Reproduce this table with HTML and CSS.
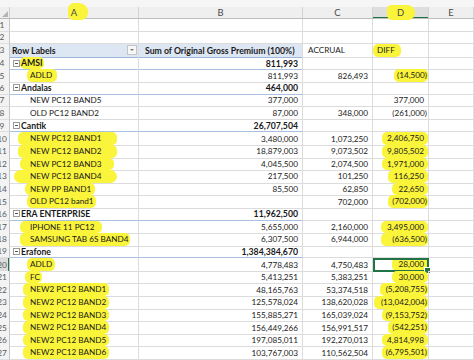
FILE: index.html
```html
<!DOCTYPE html>
<html>
<head>
<meta charset="utf-8">
<link rel="stylesheet" href="styles.css">
</head>
<body>
<div class="sheet">
  <div class="topbar"></div>
  <div class="hdr">
    <div class="corner"><span class="tri"></span></div>
    <div class="ch"><span class="mark mark-a"></span><span class="lt">A</span></div>
    <div class="ch">B</div>
    <div class="ch">C</div>
    <div class="ch sel"><span class="mark mark-d"></span><span class="lt">D</span></div>
    <div class="ch">E</div>
  </div>

  <div class="r"><div class="rh"><span>1</span></div><div class="c"></div><div class="c"></div><div class="c"></div><div class="c"></div><div class="c"></div></div>
  <div class="r"><div class="rh"><span>2</span></div><div class="c"></div><div class="c"></div><div class="c"></div><div class="c"></div><div class="c"></div></div>
  <div class="r"><div class="rh"><span>3</span></div>
    <div class="c b ph rl">Row Labels<span class="dd"></span></div>
    <div class="c b ph sum">Sum of Original Gross Premium (100%)</div>
    <div class="c acc">ACCRUAL</div>
    <div class="c"><span class="hl h-diff">DIFF</span></div>
    <div class="c"></div></div>
  <div class="r"><div class="rh"><span>4</span></div>
    <div class="c b gb"><span class="tog"></span><span class="hl h-amsi">AMSI</span></div>
    <div class="c n p b gb">811,993</div><div class="c"></div><div class="c"></div><div class="c"></div></div>
  <div class="r"><div class="rh"><span>5</span></div>
    <div class="c"><span class="hl h-adld">ADLD</span></div>
    <div class="c n p">811,993</div><div class="c n p">826,493</div>
    <div class="c n dh"><span class="hl dn w34">(14,500)</span></div><div class="c"></div></div>
  <div class="r"><div class="rh"><span>6</span></div>
    <div class="c b gb"><span class="tog"></span>Andalas</div>
    <div class="c n p b gb">464,000</div><div class="c"></div><div class="c"></div><div class="c"></div></div>
  <div class="r"><div class="rh"><span>7</span></div>
    <div class="c"><span class="lb">NEW PC12 BAND5</span></div>
    <div class="c n p">377,000</div><div class="c"></div><div class="c n p">377,000</div><div class="c"></div></div>
  <div class="r"><div class="rh"><span>8</span></div>
    <div class="c"><span class="lb">OLD PC12 BAND2</span></div>
    <div class="c n p">87,000</div><div class="c n p">348,000</div><div class="c n">(261,000)</div><div class="c"></div></div>
  <div class="r"><div class="rh"><span>9</span></div>
    <div class="c b gb"><span class="tog"></span>Cantik</div>
    <div class="c n p b gb">26,707,504</div><div class="c"></div><div class="c"></div><div class="c"></div></div>
  <div class="r"><div class="rh"><span>10</span></div>
    <div class="c"><span class="hl h-cantik">NEW PC12 BAND1</span></div>
    <div class="c n p">3,480,000</div><div class="c n p">1,073,250</div>
    <div class="c n dh"><span class="hl dp w46">2,406,750</span></div><div class="c"></div></div>
  <div class="r"><div class="rh"><span>11</span></div>
    <div class="c"><span class="hl h-cantik">NEW PC12 BAND2</span></div>
    <div class="c n p">18,879,003</div><div class="c n p">9,073,502</div>
    <div class="c n dh"><span class="hl dp w46">9,805,502</span></div><div class="c"></div></div>
  <div class="r"><div class="rh"><span>12</span></div>
    <div class="c"><span class="hl h-cantik3">NEW PC12 BAND3</span></div>
    <div class="c n p">4,045,500</div><div class="c n p">2,074,500</div>
    <div class="c n dh"><span class="hl dp w46">1,971,000</span></div><div class="c"></div></div>
  <div class="r"><div class="rh"><span>13</span></div>
    <div class="c"><span class="hl h-cantik4">NEW PC12 BAND4</span></div>
    <div class="c n p">217,500</div><div class="c n p">101,250</div>
    <div class="c n dh"><span class="hl dp w40">116,250</span></div><div class="c"></div></div>
  <div class="r"><div class="rh"><span>14</span></div>
    <div class="c"><span class="hl h-pp">NEW PP BAND1</span></div>
    <div class="c n p">85,500</div><div class="c n p">62,850</div>
    <div class="c n dh"><span class="hl dp w36">22,650</span></div><div class="c"></div></div>
  <div class="r"><div class="rh"><span>15</span></div>
    <div class="c"><span class="hl h-old">OLD PC12 band1</span></div>
    <div class="c"></div><div class="c n p">702,000</div>
    <div class="c n dh"><span class="hl dn w40">(702,000)</span></div><div class="c"></div></div>
  <div class="r"><div class="rh"><span>16</span></div>
    <div class="c b gb"><span class="tog"></span>ERA ENTERPRISE</div>
    <div class="c n p b gb">11,962,500</div><div class="c"></div><div class="c"></div><div class="c"></div></div>
  <div class="r"><div class="rh"><span>17</span></div>
    <div class="c"><span class="hl h-era">IPHONE 11 PC12</span></div>
    <div class="c n p">5,655,000</div><div class="c n p">2,160,000</div>
    <div class="c n dh"><span class="hl dp w47">3,495,000</span></div><div class="c"></div></div>
  <div class="r"><div class="rh"><span>18</span></div>
    <div class="c"><span class="hl h-era2">SAMSUNG TAB 6S BAND4</span></div>
    <div class="c n p">6,307,500</div><div class="c n p">6,944,000</div>
    <div class="c n dh"><span class="hl dn w47">(636,500)</span></div><div class="c"></div></div>
  <div class="r"><div class="rh"><span>19</span></div>
    <div class="c b gb"><span class="tog"></span>Erafone</div>
    <div class="c n p b gb">1,384,384,670</div><div class="c"></div><div class="c"></div><div class="c"></div></div>
  <div class="r"><div class="rh rsel"><span>20</span></div>
    <div class="c"><span class="hl h-adld2">ADLD</span></div>
    <div class="c n p">4,778,483</div><div class="c n p">4,750,483</div>
    <div class="c n dh selc"><span class="hl dp w36">28,000</span></div><div class="c"></div></div>
  <div class="r"><div class="rh"><span>21</span></div>
    <div class="c"><span class="hl h-fc">FC</span></div>
    <div class="c n p">5,413,251</div><div class="c n p">5,383,251</div>
    <div class="c n dh"><span class="hl dp w36">30,000</span></div><div class="c"></div></div>
  <div class="r"><div class="rh"><span>22</span></div>
    <div class="c"><span class="hl h-new2">NEW2 PC12 BAND1</span></div>
    <div class="c n p">48,165,763</div><div class="c n p">53,374,518</div>
    <div class="c n dh"><span class="hl dn w48">(5,208,755)</span></div><div class="c"></div></div>
  <div class="r"><div class="rh"><span>23</span></div>
    <div class="c"><span class="hl h-new2">NEW2 PC12 BAND2</span></div>
    <div class="c n p">125,578,024</div><div class="c n p">138,620,028</div>
    <div class="c n dh"><span class="hl dn w54">(13,042,004)</span></div><div class="c"></div></div>
  <div class="r"><div class="rh"><span>24</span></div>
    <div class="c"><span class="hl h-new2">NEW2 PC12 BAND3</span></div>
    <div class="c n p">155,885,271</div><div class="c n p">165,039,024</div>
    <div class="c n dh"><span class="hl dn w46">(9,153,752)</span></div><div class="c"></div></div>
  <div class="r"><div class="rh"><span>25</span></div>
    <div class="c"><span class="hl h-new2">NEW2 PC12 BAND4</span></div>
    <div class="c n p">156,449,266</div><div class="c n p">156,991,517</div>
    <div class="c n dh"><span class="hl dn w40">(542,251)</span></div><div class="c"></div></div>
  <div class="r"><div class="rh"><span>26</span></div>
    <div class="c"><span class="hl h-new2">NEW2 PC12 BAND5</span></div>
    <div class="c n p">197,085,011</div><div class="c n p">192,270,013</div>
    <div class="c n dh"><span class="hl dp w46">4,814,998</span></div><div class="c"></div></div>
  <div class="r"><div class="rh"><span>27</span></div>
    <div class="c"><span class="hl h-new2">NEW2 PC12 BAND6</span></div>
    <div class="c n p">103,767,003</div><div class="c n p">110,562,504</div>
    <div class="c n dh"><span class="hl dn w46">(6,795,501)</span></div><div class="c"></div></div>
</div>
</body>
</html>
```

FILE: styles.css
```css
* { box-sizing: border-box; }
html, body { margin: 0; padding: 0; }
body {
  width: 474px;
  height: 360px;
  overflow: hidden;
  background: #fff;
  font-family: Lato, "Liberation Sans", sans-serif;
  font-size: 8.2px;
  color: #1a1a1a;
}
.topbar { height: 7px; background: #f6f6f6; }

.hdr {
  display: grid;
  grid-template-columns: 10px 129px 164px 70px 56px 45px;
  height: 12px;
  background: #efefef;
  border-bottom: 1px solid #bdbdbd;
}
.corner { position: relative; border-right: 1px solid #d0d0d0; }
.tri {
  position: absolute; right: 1px; bottom: 1px;
  width: 0; height: 0;
  border-left: 6px solid transparent;
  border-bottom: 6px solid #b5b5b5;
}
.ch {
  position: relative;
  display: flex; align-items: center; justify-content: center;
  border-right: 1px solid #d3d3d3;
  color: #4a4a4a;
  font-size: 9.4px;
}
.ch.sel { background: #dedede; box-shadow: inset 0 -1px 0 #217346; }
.lt { position: relative; }
.mark { position: absolute; background: #faf43a; }
.mark-a { left: 58px; top: -4px; width: 20px; height: 17px; border-radius: 6px 9px 7px 5px; }
.mark-d { left: 14px; top: -2px; width: 28px; height: 15px; border-radius: 5px 9px 8px 6px; }

.r {
  display: grid;
  grid-template-columns: 10px 129px 164px 70px 56px 45px;
  height: 12.6px;
}
.rh {
  display: flex; align-items: center;
  overflow: hidden;
  background: #f3f3f3;
  border-right: 1px solid #c6c6c6;
  border-bottom: 1px solid #dedede;
  color: #5a5a5a;
  font-size: 8.4px;
}
.rh span { flex: none; width: 14px; margin-left: -5px; text-align: center; }
.rh.rsel { background: #dcdcdc; box-shadow: inset -1px 0 0 #217346; }

.c {
  position: relative;
  display: flex; align-items: center;
  white-space: nowrap;
  min-width: 0;
  border-right: 1px solid #dcdcdc;
  border-bottom: 1px solid #dcdcdc;
  padding: 0 1px 0 2px;
}
.n { justify-content: flex-end; }
.p { padding-right: 4px; }
.b { font-weight: 700; font-size: 8.7px; }
.ph { background: #dde7f4; border-bottom-color: #9bb8db; }
.gb { border-bottom-color: #a9c1e0; }
.sum { padding-left: 6px; }
.acc { padding-left: 5px; }
.rl { justify-content: space-between; padding-right: 1px; }
.dd {
  position: relative;
  width: 10px; height: 10px;
  background: #f7f7f7;
  border: 1px solid #c4c4c4;
}
.dd::after {
  content: "";
  position: absolute; left: 2px; top: 3px;
  border-left: 2px solid transparent;
  border-right: 2px solid transparent;
  border-top: 2px solid #777;
}

.tog {
  position: relative;
  flex: none;
  width: 7px; height: 7px;
  margin: 0 1px 0 1px;
  border: 1px solid #9a9a9a;
  background: #fff;
}
.tog::after {
  content: "";
  position: absolute; left: 1px; right: 1px; top: 2px;
  height: 1px; background: #555;
}
.lb { margin-left: 18px; }

.hl {
  display: inline-block;
  background: #faf43a;
  line-height: 12.6px;
  border-radius: 5px;
}
.h-diff { margin-left: -2px; padding: 0 6px 0 4px; }
.h-amsi { margin-left: -1px; padding: 0 1px; }
.h-adld { margin-left: 15px; padding: 0 5px 0 3px; }
.h-cantik { margin-left: 6px; padding: 0 16px 0 12px; }
.h-cantik3 { margin-left: 8px; padding: 0 13px 0 10px; }
.h-cantik4 { margin-left: 2px; padding: 0 16px 0 16px; border-radius: 8px; }
.h-pp { margin-left: 13px; padding: 0 4px 0 5px; }
.h-old { margin-left: 15px; padding: 0 2px 0 3px; }
.h-era { margin-left: 8px; padding: 0 7px 0 10px; }
.h-era2 { margin-left: 8px; padding: 0 2px 0 10px; }
.h-adld2 { margin-left: 15px; padding: 0 3px 0 3px; }
.h-fc { margin-left: 13px; padding: 0 2px 0 5px; }
.h-new2 { margin-left: 11px; padding: 0 3px 0 7px; }

.dh { padding-right: 0; }
.dn { padding-right: 1px; text-align: right; }
.dp { padding-right: 4px; text-align: right; }
.w34 { min-width: 34px; }
.w36 { min-width: 36px; }
.w40 { min-width: 40px; }
.w46 { min-width: 46px; }
.w47 { min-width: 47px; }
.w48 { min-width: 48px; }
.w54 { min-width: 54px; }

.selc { outline: 2px solid #217346; outline-offset: -2px; }
.selc::after {
  content: "";
  position: absolute; right: -3px; bottom: -3px;
  width: 5px; height: 5px;
  background: #217346;
  border: 1px solid #fff;
}
```
